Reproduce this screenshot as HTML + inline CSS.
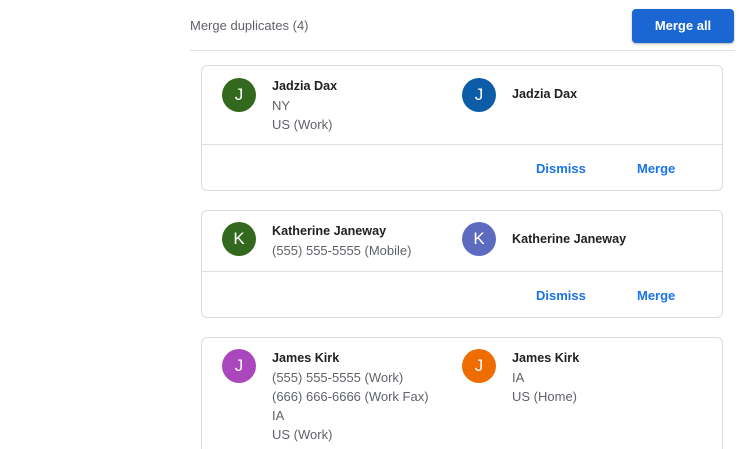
<!DOCTYPE html>
<html style="overflow:hidden;height:449px"><head><style>
body{margin:0;width:740px;height:449px;overflow:hidden;background:#fff;font-family:"Liberation Sans",Arial,sans-serif;position:relative}
.a{position:absolute}
.hdr{left:190px;top:18px;font-size:13px;color:#5f6368}
.line{left:190px;top:50px;width:545px;height:1px;background:#e0e0e0}
.btn{left:632px;top:9px;width:102px;height:34px;background:#1a66d2;border-radius:4px;color:#fff;font-size:13px;font-weight:bold;text-align:center;line-height:33px;box-shadow:0 1px 2px rgba(0,0,0,.3)}
.card{position:absolute;left:201px;width:522px;border:1px solid #dadce0;border-radius:6px;box-sizing:border-box}
.av{position:absolute;width:34px;height:34px;border-radius:50%;color:#fff;font-size:17px;text-align:center;line-height:34px}
.t{position:absolute;font-size:13px;color:#5f6368;line-height:19px}
.t b{color:#202124;font-weight:bold;font-size:12.6px}
.div{position:absolute;left:0;right:0;height:1px;background:#e0e0e0}
.lk{position:absolute;font-size:13px;font-weight:bold;color:#1a73e8}
</style></head><body>
<div class="a hdr">Merge duplicates (4)</div>
<div class="a line"></div>
<div class="a btn">Merge all</div>

<div class="card" style="top:65px;height:126px">
<div class="av" style="left:20px;top:12px;background:#33691e">J</div>
<div class="t" style="left:70px;top:10px"><b>Jadzia Dax</b><br>NY<br>US (Work)</div>
<div class="av" style="left:260px;top:12px;background:#0d5ca8">J</div>
<div class="t" style="left:310px;top:18px"><b>Jadzia Dax</b></div>
<div class="div" style="top:78px"></div>
<div class="lk" style="left:334px;top:95px">Dismiss</div>
<div class="lk" style="left:435px;top:95px">Merge</div>
</div>

<div class="card" style="top:210px;height:108px">
<div class="av" style="left:20px;top:11px;background:#33691e">K</div>
<div class="t" style="left:70px;top:10px"><b>Katherine Janeway</b><br>(555) 555-5555 (Mobile)</div>
<div class="av" style="left:260px;top:11px;background:#5c6bc0">K</div>
<div class="t" style="left:310px;top:18px"><b>Katherine Janeway</b></div>
<div class="div" style="top:60px"></div>
<div class="lk" style="left:334px;top:77px">Dismiss</div>
<div class="lk" style="left:435px;top:77px">Merge</div>
</div>

<div class="card" style="top:337px;height:112px;border-bottom:none;border-radius:6px 6px 0 0">
<div class="av" style="left:20px;top:11px;background:#ab47bc">J</div>
<div class="t" style="left:70px;top:10px"><b>James Kirk</b><br>(555) 555-5555 (Work)<br>(666) 666-6666 (Work Fax)<br>IA<br>US (Work)</div>
<div class="av" style="left:260px;top:11px;background:#ef6c00">J</div>
<div class="t" style="left:310px;top:10px"><b>James Kirk</b><br>IA<br>US (Home)</div>
</div>
</body></html>
